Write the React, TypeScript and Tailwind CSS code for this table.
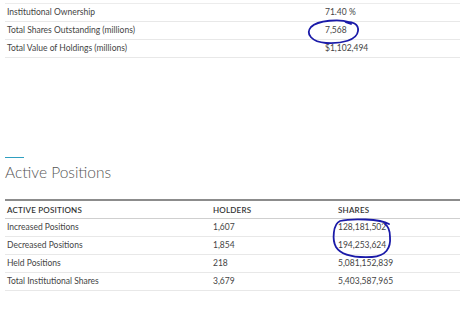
import React from "react";

const top = [
  ["Institutional Ownership", "71.40 %"],
  ["Total Shares Outstanding (millions)", "7,568"],
  ["Total Value of Holdings (millions)", "$1,102,494"],
];

const rows = [
  ["Increased Positions", "1,607", "128,181,502"],
  ["Decreased Positions", "1,854", "194,253,624"],
  ["Held Positions", "218", "5,081,152,839"],
  ["Total Institutional Shares", "3,679", "5,403,587,965"],
];

export default function App() {
  return (
    <div
      className="relative w-[474px] h-[323px] bg-white text-[#444] overflow-hidden"
      style={{ fontFamily: "Lato, 'Open Sans', sans-serif" }}
    >
      <div className="pl-[5px] pr-[14px] pt-[3px]">
        <div className="border-t border-[#ececec]">
          {top.map(([a, b]) => (
            <div key={a} className="flex h-[18px] items-center border-b border-[#e8e8e8] text-[8.5px]">
              <div className="w-[320px] pl-[2px]">{a}</div>
              <div>{b}</div>
            </div>
          ))}
        </div>

        <div className="mt-[99px] w-[19px] h-[1px] bg-[#2f9fc0]" />
        <div className="mt-[5px] text-[15.5px] font-light text-[#555] leading-[18px]">Active Positions</div>
        <div className="mt-[18px] border-t-2 border-[#8c8c8c]">
          <div className="flex h-[18px] items-center border-b border-[#cfcfcf] text-[8px] font-semibold tracking-[0.2px] text-[#333]">
            <div className="w-[208px] pl-[2px]">ACTIVE POSITIONS</div>
            <div className="w-[125px]">HOLDERS</div>
            <div>SHARES</div>
          </div>
          {rows.map(([a, b, c]) => (
            <div key={a} className="flex h-[18px] items-center border-b border-[#e8e8e8] text-[8.5px]">
              <div className="w-[208px] pl-[2px]">{a}</div>
              <div className="w-[125px]">{b}</div>
              <div>{c}</div>
            </div>
          ))}
        </div>
      </div>

      <svg className="absolute left-0 top-0" width="474" height="323" viewBox="0 0 474 323" fill="none">
        <path
          d="M349 22 C 340 19, 318 20, 311 27 C 305 34, 312 42, 326 43 C 342 44, 357 40, 358 31 C 359 24, 352 21, 345 22 L 351 24"
          stroke="#1a1aa8"
          strokeWidth="1.8"
          strokeLinecap="round"
        />
        <path
          d="M389 224 C 380 219, 352 218, 340 221 C 333 224, 332 240, 336 247 C 341 255, 352 258, 372 257 C 386 256, 391 248, 390 237 C 390 230, 388 226, 385 224"
          stroke="#1a1aa8"
          strokeWidth="1.8"
          strokeLinecap="round"
        />
      </svg>
    </div>
  );
}
